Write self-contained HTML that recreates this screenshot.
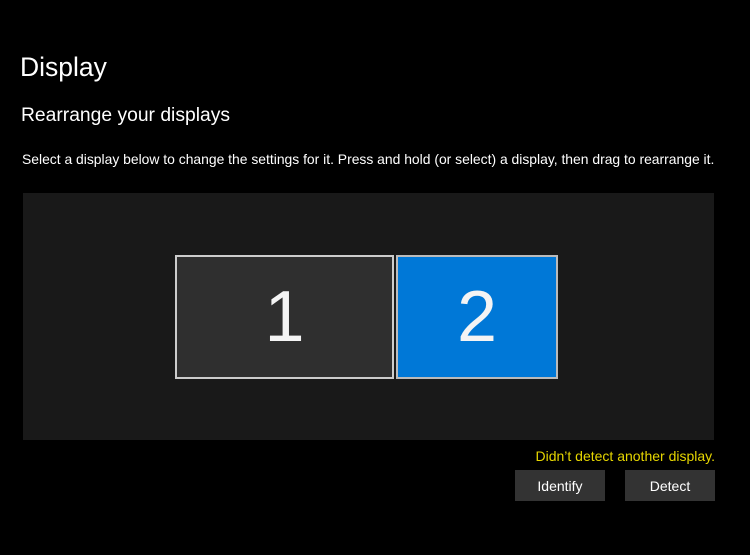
<html><head><style>
body{margin:0;width:750px;height:555px;background:#000;color:#fff;font-family:"Liberation Sans",sans-serif;position:relative;overflow:hidden}
.a{position:absolute;white-space:nowrap}
.mon{position:absolute;box-sizing:border-box;border:2px solid #ccc;display:flex;align-items:center;justify-content:center;font-size:72px;font-weight:300;color:#f4f4f4}
.btn{position:absolute;top:470px;width:90px;height:31px;background:#333;color:#fff;font-size:14px;display:flex;align-items:center;justify-content:center}
</style></head><body>
<div class="a" style="left:20px;top:52px;font-size:26.5px">Display</div>
<div class="a" style="left:21px;top:105px;font-size:19.3px">Rearrange your displays</div>
<div class="a" style="left:22px;top:151px;font-size:13.9px">Select a display below to change the settings for it. Press and hold (or select) a display, then drag to rearrange it.</div>
<div class="a" style="left:23px;top:193px;width:691px;height:247px;background:#191919"></div>
<div class="mon" style="left:175px;top:255px;width:219px;height:124px;background:#2f2f2f">1</div>
<div class="mon" style="left:396px;top:255px;width:162px;height:124px;background:#0078d7;border-color:#bbb">2</div>
<div class="a" style="right:35px;top:448px;font-size:14px;color:#e6d600">Didn’t detect another display.</div>
<div class="btn" style="left:515px">Identify</div>
<div class="btn" style="left:625px">Detect</div>
</body></html>
